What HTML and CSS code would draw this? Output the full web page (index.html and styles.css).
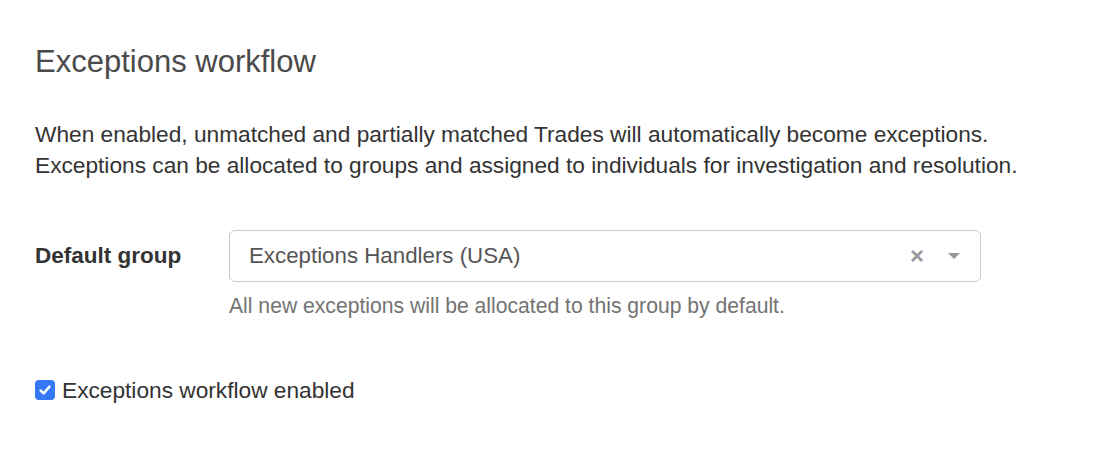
FILE: index.html
```html
<!DOCTYPE html>
<html lang="en">
<head>
    <meta charset="UTF-8">
    <title>Exceptions workflow</title>
    <link rel="stylesheet" href="styles.css">
</head>
<body>
    <div class="settings">
        <h3 class="title">Exceptions workflow</h3>
        <p class="intro">When enabled, unmatched and partially matched Trades will automatically become exceptions.<br>Exceptions can be allocated to groups and assigned to individuals for investigation and resolution.</p>

        <div class="form-row">
            <label class="row-label" for="defaultGroup">Default group</label>
            <div class="row-field">
                <div class="select" id="defaultGroup">
                    <span class="select-value">Exceptions Handlers (USA)</span>
                    <span class="select-clear">&times;</span>
                    <span class="select-arrow"></span>
                </div>
                <p class="help">All new exceptions will be allocated to this group by default.</p>
            </div>
        </div>

        <label class="check">
            <span class="check-box">
                <svg width="14" height="14" viewBox="0 0 14 14"><path d="M2.5 7.4 L5.6 10.4 L11.5 3.6" fill="none" stroke="#fff" stroke-width="2.4" stroke-linecap="round" stroke-linejoin="round"/></svg>
            </span>
            Exceptions workflow enabled
        </label>
    </div>
</body>
</html>
```

FILE: styles.css
```css
body {
    margin: 0;
    font-family: 'Liberation Sans', Arial, sans-serif;
    background-color: #fff;
    color: #333;
}
.settings {
    padding: 45px 35px 0 35px;
}
.title {
    font-size: 31px;
    font-weight: 300;
    color: #4a4a4a;
    margin: 0 0 40px 0;
    line-height: 34px;
}
.intro {
    font-size: 22.7px;
    line-height: 31px;
    margin: 0 0 49px 0;
}
.form-row {
    display: flex;
    align-items: flex-start;
}
.row-label {
    width: 194px;
    font-size: 22.5px;
    font-weight: bold;
    line-height: 52px;
}
.row-field {
    width: 752px;
}
.select {
    display: flex;
    align-items: center;
    height: 52px;
    box-sizing: border-box;
    border: 1px solid #ccc;
    border-radius: 6px;
    padding: 0 0 0 19px;
    font-size: 22.3px;
    color: #555;
}
.select-value {
    flex: 1;
}
.select-clear {
    color: #999;
    font-size: 24px;
    font-weight: bold;
    margin-right: 24px;
}
.select-arrow {
    width: 0;
    height: 0;
    border-left: 6px solid transparent;
    border-right: 6px solid transparent;
    border-top: 6px solid #999;
    margin-right: 20px;
}
.help {
    font-size: 21.15px;
    color: #737373;
    margin: 11px 0 0 0;
    line-height: 26px;
}
.check {
    display: flex;
    align-items: center;
    gap: 7px;
    margin-top: 58px;
    font-size: 22.7px;
    line-height: 26px;
}
.check-box {
    width: 20px;
    height: 20px;
    border-radius: 4px;
    background-color: #3478f6;
    display: flex;
    align-items: center;
    justify-content: center;
}
```
